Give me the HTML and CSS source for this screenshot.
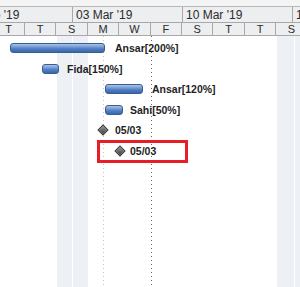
FILE: index.html
```html
<!DOCTYPE html>
<html>
<head>
<meta charset="utf-8">
<link rel="stylesheet" href="styles.css">
</head>
<body>
<div class="gantt">
  <div class="topstrip"></div>
  <div class="weeks">
    <div class="week first">24 Feb '19</div>
    <div class="week">03 Mar '19</div>
    <div class="week">10 Mar '19</div>
    <div class="week">17 Mar '19</div>
  </div>
  <div class="days">
    <div class="day">T</div><div class="day">T</div><div class="day">S</div><div class="day">M</div><div class="day">W</div><div class="day">F</div><div class="day">S</div><div class="day">T</div><div class="day">T</div><div class="day">S</div>
  </div>
  <div class="chart">
    <div class="vline light"></div>
    <div class="vline dark"></div>
    <div class="row"><span class="bar" style="margin-left:10px;width:93px"></span><span class="label gap10">Ansar[200%]</span></div>
    <div class="row"><span class="bar" style="margin-left:42px;width:15px"></span><span class="label gap8">Fida[150%]</span></div>
    <div class="row"><span class="bar" style="margin-left:105px;width:36px"></span><span class="label gap9">Ansar[120%]</span></div>
    <div class="row"><span class="bar" style="margin-left:105px;width:16px"></span><span class="label gap7">Sahi[50%]</span></div>
    <div class="row"><span class="diamond" style="margin-left:99px"></span><span class="label gap8">05/03</span></div>
    <div class="row tall"><div class="highlight"><span class="diamond"></span><span class="label gap6">05/03</span></div></div>
  </div>
</div>
</body>
</html>
```
FILE: styles.css
```css
html, body { margin: 0; padding: 0; }
body { width: 300px; height: 287px; overflow: hidden; background: #fff; font-family: "Liberation Sans", Arial, sans-serif; }
.gantt { width: 300px; height: 287px; overflow: hidden; display: flex; flex-direction: column; }
.topstrip { height: 6px; background: #f4f4f4; border-bottom: 1px solid #b9b9b9; flex: none; }
.weeks { height: 15px; display: flex; margin-left: -37px; background: #eceef0; border-bottom: 1px solid #a8a8a8; flex: none; }
.week { flex: none; border-right: 1px solid #a8a8a8; font-size: 12px; line-height: 16px; padding-left: 3px; width: 106px; color: #2b2b2b; white-space: nowrap; overflow: hidden; }
.week.first { padding-left: 0; width: 109px; }
.days { height: 12px; display: flex; margin-left: -6.5px; background: #eceef0; border-bottom: 1px solid #a8a8a8; flex: none; }
.day { flex: none; width: 30.43px; border-right: 1px solid #a8a8a8; font-size: 11px; line-height: 13px; text-align: center; color: #2b2b2b; }
.chart { position: relative; flex: 1; padding-top: 1.75px;
  background: linear-gradient(to right, transparent 57px, #edf0f5 57px, #edf0f5 72px, #fff 72px, #fff 73px, #edf0f5 73px, #edf0f5 88px, transparent 88px, transparent 277px, #edf0f5 277px, #edf0f5 294px, #fff 294px, #fff 295px, #edf0f5 295px); }
.vline { position: absolute; top: 0; bottom: 0; width: 1px; }
.vline.light { left: 103px; background: repeating-linear-gradient(to bottom, #c4c4c4 0 1px, transparent 1px 4px); }
.vline.dark { left: 151px; background: repeating-linear-gradient(to bottom, #6a6a6a 0 1px, transparent 1px 4px); }
.row { position: relative; height: 20.5px; display: flex; align-items: center; }
.row.tall { height: 22px; }
.bar { flex: none; height: 8px; border: 1px solid #3a5f8f; border-radius: 3px;
  background: linear-gradient(to bottom, #a9c3ea 0%, #7ea2d8 30%, #4f7ec2 60%, #3767ad 100%); }
.label { font-size: 10.5px; font-weight: bold; color: #1e1e1e; white-space: nowrap; }
.gap10 { margin-left: 10px; }
.gap9 { margin-left: 9px; }
.gap8 { margin-left: 8px; }
.gap7 { margin-left: 7px; }
.gap6 { margin-left: 6px; }
.diamond { flex: none; width: 6px; height: 6px; transform: rotate(45deg); background: linear-gradient(135deg, #9a9a9a, #3c3c3c); border: 0.5px solid #333; }
.highlight { flex: none; margin-left: 97px; height: 17px; border: 3px solid #e81d26; display: flex; align-items: center; padding-left: 16px; width: 69px; }
```
